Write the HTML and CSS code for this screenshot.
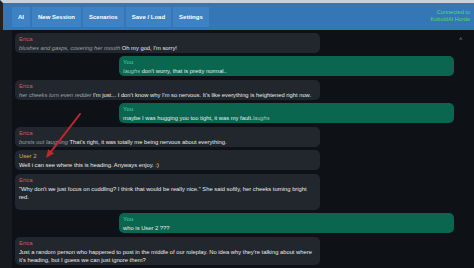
FILE: index.html
```html
<!DOCTYPE html>
<html>
	<head>
		<meta charset="utf-8">
		<title>KoboldAI Lite</title>
		<link rel="stylesheet" href="styles.css">
	</head>
	<body>
		<div class="top">
			<div class="menu">
				<div class="btn">AI</div>
				<div class="btn">New Session</div>
				<div class="btn">Scenarios</div>
				<div class="btn">Save / Load</div>
				<div class="btn">Settings</div>
			</div>
			<div class="status">Connected to<br>KoboldAI Horde</div>
		</div>
		<div class="main">
			<div class="side"></div>
			<div class="chat">
				<div class="msg bot">
					<div class="name erica">Erica</div>
					<div class="text"><i>blushes and gasps, covering her mouth</i> Oh my god, I'm sorry!</div>
				</div>
				<div class="msg you">
					<div class="name me">You</div>
					<div class="text"><i>laughs</i> don't worry, that is pretty normal..</div>
				</div>
				<div class="msg bot">
					<div class="name erica">Erica</div>
					<div class="text"><i>her cheeks turn even redder</i> I'm just... I don't know why I'm so nervous. It's like everything is heightened right now.</div>
				</div>
				<div class="msg you">
					<div class="name me">You</div>
					<div class="text">maybe I was hugging you too tight, it was my fault.<i>laughs</i></div>
				</div>
				<div class="msg bot">
					<div class="name erica">Erica</div>
					<div class="text"><i>bursts out laughing</i> That's right, it was totally me being nervous about everything.</div>
				</div>
				<div class="msg bot">
					<div class="name user2">User 2</div>
					<div class="text">Well i can see where this is heading. Anyways enjoy. :)</div>
				</div>
				<div class="msg bot">
					<div class="name erica">Erica</div>
					<div class="text">"Why don't we just focus on cuddling? I think that would be really nice." She said softly, her cheeks turning bright red.<br><br></div>
				</div>
				<div class="msg you">
					<div class="name me">You</div>
					<div class="text">who is User 2 ???</div>
				</div>
				<div class="msg bot">
					<div class="name erica">Erica</div>
					<div class="text">Just a random person who happened to post in the middle of our roleplay. No idea why they're talking about where it's heading, but I guess we can just ignore them?</div>
				</div>
			</div>
			<div class="scroll">&#708;</div>
		</div>
		<!-- red arrow drawn on the screenshot -->
		<svg class="arrow" width="474" height="268" viewBox="0 0 474 268">
			<line x1="80" y1="114" x2="50" y2="153" stroke="#c4262e" stroke-width="2" stroke-linecap="round"/>
			<polygon points="46,158 54,153.6 48.2,149.2" fill="#c4262e"/>
		</svg>
	</body>
</html>
```

FILE: styles.css
```css
	html,body{
		margin: 0;
		padding: 0;
	}
	body{
		width: 474px;
		height: 268px;
		overflow: hidden;
		background: #15191e;
		font-family: "Liberation Sans", Arial, sans-serif;
		position: relative;
	}
	.top{
		height: 27px;
		border-top: 3px solid #c9d1da;
		border-left: 3px solid #24211f;
		background: #3576b6;
		display: flex;
		justify-content: space-between;
	}
	.menu{
		display: flex;
		gap: 2px;
		padding: 4px 0 0 9px;
	}
	.btn{
		height: 20px;
		line-height: 20px;
		padding: 0 6px;
		background: #3f82c4;
		color: #fff;
		font-size: 6px;
		font-weight: bold;
	}
	.status{
		padding: 6px 4px 0 0;
		text-align: right;
		color: #4ede5a;
		font-size: 5.6px;
		line-height: 7px;
	}
	.main{
		display: flex;
		height: 238px;
	}
	.side{
		width: 12px;
		background: #171b20;
	}
	.chat{
		width: 442px;
		padding: 2.5px 3px 0 3px;
		background: #0e1217;
		display: flex;
		flex-direction: column;
		gap: 3.5px;
		overflow: hidden;
	}
	.scroll{
		width: 17px;
		background: #0e1217;
		color: #8a9096;
		font-size: 6px;
		padding: 6px 0 0 2px;
		box-sizing: border-box;
	}
	.msg{
		flex: none;
		padding: 2px 4px 1px;
		border-radius: 5px;
		box-sizing: border-box;
	}
	.bot{
		width: 305px;
		background: #22272d;
	}
	.you{
		width: 335px;
		align-self: flex-end;
		background: #0b6650;
	}
	.name{
		font-size: 6px;
		line-height: 9px;
	}
	.erica{
		color: #cc5a5f;
	}
	.me{
		color: #46d99a;
	}
	.user2{
		color: #dcae52;
	}
	.text{
		font-size: 5.8px;
		line-height: 8px;
		color: #e8eaec;
	}
	.text i{
		color: #9aa1a8;
	}
	.you .text i{
		color: #a8c8bc;
	}
	.arrow{
		position: absolute;
		left: 0;
		top: 0;
	}
```
